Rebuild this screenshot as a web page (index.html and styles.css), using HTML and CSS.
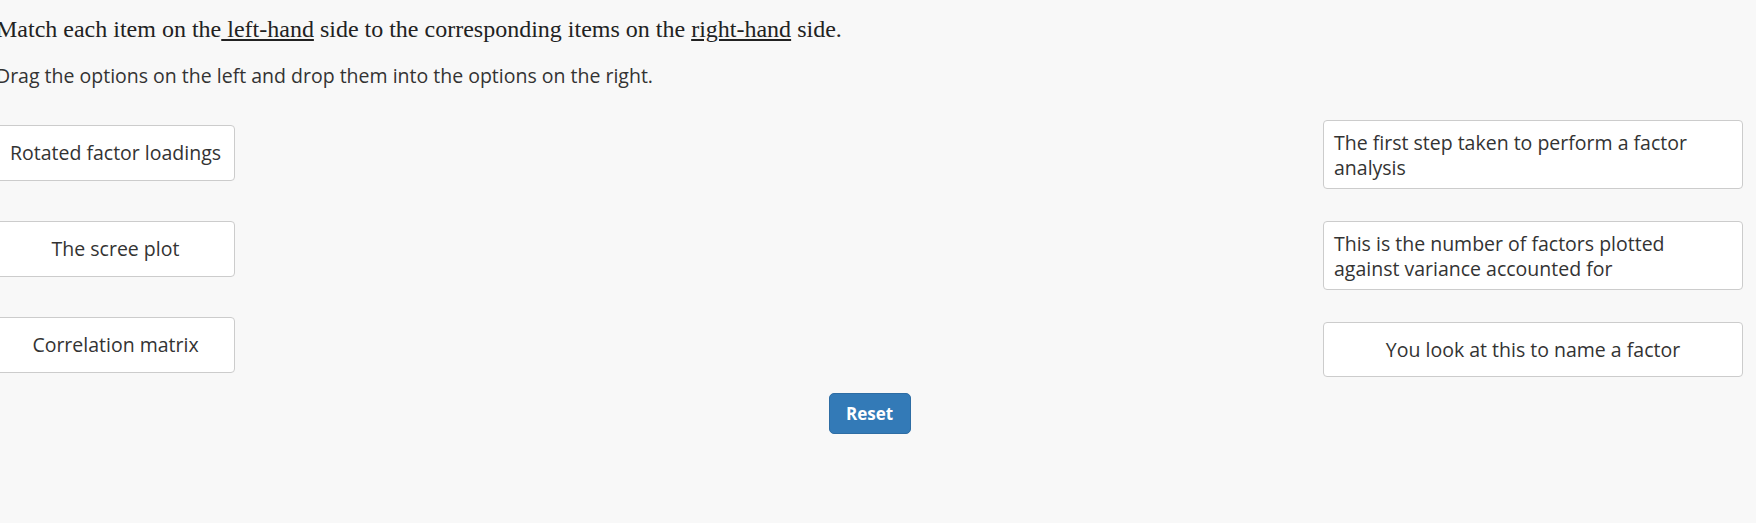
FILE: index.html
```html
<!DOCTYPE html>
<html>
<head>
<meta charset="utf-8">
<link rel="stylesheet" href="styles.css">
</head>
<body>
<div class="quiz">
  <p class="prompt">Match each item on the<u> left-hand</u> side to the corresponding items on the <u>right-hand</u> side.</p>
  <p class="hint">Drag the options on the left and drop them into the options on the right.</p>
  <div class="board">
    <div class="col col-left">
      <div class="item">Rotated factor loadings</div>
      <div class="item">The scree plot</div>
      <div class="item">Correlation matrix</div>
    </div>
    <div class="col col-right">
      <div class="target">The first step taken to perform a factor analysis</div>
      <div class="target">This is the number of factors plotted against variance accounted for</div>
      <div class="target target-single">You look at this to name a factor</div>
    </div>
  </div>
  <div class="actions">
    <button class="reset">Reset</button>
  </div>
</div>
</body>
</html>
```

FILE: styles.css
```css
html, body {
  margin: 0;
  padding: 0;
  background: #f8f8f8;
}
body {
  font-family: "Open Sans", "Liberation Sans", sans-serif;
  color: #333;
}
.quiz {
  margin-left: -4px;
  width: 1747px;
}
.prompt {
  margin: 0;
  padding-top: 15px;
  font-family: "Liberation Serif", "Times New Roman", serif;
  font-size: 24px;
  line-height: 28px;
  color: #222;
}
.prompt u {
  text-underline-offset: 2px;
}
.hint {
  margin: 20px 0 0 0;
  font-size: 19.5px;
  line-height: 26px;
}
.board {
  display: flex;
  justify-content: space-between;
  align-items: flex-start;
}
.col {
  display: flex;
  flex-direction: column;
}
.col-left {
  margin-top: 36px;
  gap: 40px;
  width: 239px;
}
.col-right {
  margin-top: 31px;
  gap: 32px;
  width: 420px;
}
.item, .target {
  box-sizing: border-box;
  background: #fff;
  border: 1px solid #ccc;
  border-radius: 4px;
  font-size: 19.5px;
  line-height: 25.5px;
}
.item {
  height: 56px;
  display: flex;
  align-items: center;
  justify-content: center;
}
.target {
  height: 69px;
  padding: 8.5px 10px 8px 10px;
}
.target-single {
  height: 55px;
  display: flex;
  align-items: center;
  justify-content: center;
  padding: 0 10px;
}
.actions {
  display: flex;
  justify-content: center;
  margin-top: 16px;
}
.reset {
  width: 82px;
  height: 41px;
  background: #337ab7;
  border: 1px solid #2e6da4;
  border-radius: 5px;
  color: #fff;
  font-family: "Open Sans", "Liberation Sans", sans-serif;
  font-weight: 700;
  font-size: 17px;
  padding: 0;
}
```
